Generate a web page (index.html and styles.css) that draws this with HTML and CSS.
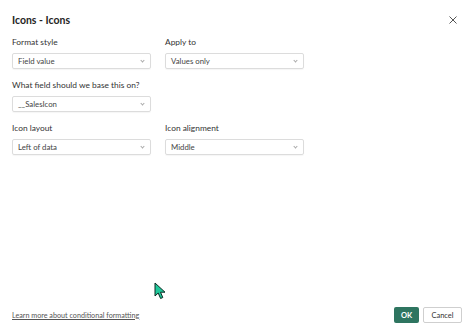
FILE: index.html
```html
<!DOCTYPE html>
<html lang="en">
<head>
  <meta charset="UTF-8" />
  <title>Icons - Icons</title>
  <link rel="stylesheet" href="styles.css">
</head>
<body>
  <div class="dialog">
    <div class="header">
      <h1>Icons - Icons</h1>
      <button type="button" class="close-btn" aria-label="Close">
        <svg width="8" height="8" viewBox="0 0 8 8"><path d="M0.5 0.5 L7.5 7.5 M7.5 0.5 L0.5 7.5" stroke="#555" stroke-width="1" fill="none"/></svg>
      </button>
    </div>

    <!-- Format / apply -->
    <div class="row">
      <div class="field">
        <label>Format style</label>
        <div class="select"><span>Field value</span><span class="chev"></span></div>
      </div>
      <div class="field">
        <label>Apply to</label>
        <div class="select"><span>Values only</span><span class="chev"></span></div>
      </div>
    </div>

    <div class="row">
      <div class="field">
        <label>What field should we base this on?</label>
        <div class="select"><span>__SalesIcon</span><span class="chev"></span></div>
      </div>
    </div>

    <!-- Icon options -->
    <div class="row">
      <div class="field">
        <label>Icon layout</label>
        <div class="select"><span>Left of data</span><span class="chev"></span></div>
      </div>
      <div class="field">
        <label>Icon alignment</label>
        <div class="select"><span>Middle</span><span class="chev"></span></div>
      </div>
    </div>

    <div class="footer">
      <a href="#" class="learn">Learn more about conditional formatting</a>
      <div class="actions">
        <button type="button" class="ok-btn">OK</button>
        <button type="button" class="cancel-btn">Cancel</button>
      </div>
    </div>
  </div>

  <svg class="cursor" width="13" height="18" viewBox="0 0 13 18">
    <path d="M1 1 L1 14 L4.2 11 L6.6 16.5 L8.8 15.5 L6.5 10.2 L11 10.2 Z" fill="#1fc89a" stroke="#0b2a22" stroke-width="1" stroke-linejoin="round"/>
  </svg>
</body>
</html>
```

FILE: styles.css
```css
body {
  margin: 0;
  font-family: Lato, "Open Sans", sans-serif;
  color: #252423;
  background: #fff;
}
.dialog {
  width: 474px;
  height: 335px;
  box-sizing: border-box;
  padding: 10px 12px 12px 12px;
  display: flex;
  flex-direction: column;
}
.header {
  display: flex;
  justify-content: space-between;
  align-items: center;
  height: 20px;
  margin-bottom: 6px;
}
h1 {
  margin: 0;
  font-size: 10.5px;
  font-weight: 700;
  color: #252423;
}
.close-btn {
  border: none;
  background: none;
  padding: 0;
  margin-right: 4px;
  width: 10px;
  height: 10px;
  display: flex;
  align-items: center;
  justify-content: center;
}
.row {
  display: flex;
  gap: 14px;
  margin-bottom: 10px;
}
.field {
  width: 139px;
}
label {
  display: block;
  white-space: nowrap;
  font-size: 8.4px;
  line-height: 13px;
  margin-bottom: 4px;
  color: #333;
}
.select {
  height: 16px;
  box-sizing: border-box;
  border: 1px solid #dcdcdc;
  border-radius: 2px;
  display: flex;
  align-items: center;
  justify-content: space-between;
  padding: 0 6px 0 5px;
  font-size: 7.8px;
  color: #444;
  box-shadow: 0 1px 1px rgba(0, 0, 0, 0.04);
}
.chev {
  width: 2px;
  height: 2px;
  border-right: 1px solid #aaa;
  border-bottom: 1px solid #aaa;
  transform: rotate(45deg);
  margin-top: -2px;
}
.footer {
  margin-top: auto;
  display: flex;
  justify-content: space-between;
  align-items: center;
}
.learn {
  font-size: 7.2px;
  color: #555;
  text-decoration: underline;
}
.actions {
  display: flex;
  gap: 4px;
}
.ok-btn,
.cancel-btn {
  height: 16px;
  box-sizing: border-box;
  font-family: inherit;
  font-size: 7.5px;
  border-radius: 2px;
  padding: 0;
}
.ok-btn {
  width: 25px;
  border: none;
  background: #2e7560;
  color: #fff;
  font-weight: 700;
}
.cancel-btn {
  width: 39px;
  border: 1px solid #cfcfcf;
  background: #fff;
  color: #333;
}
.cursor {
  position: absolute;
  left: 154px;
  top: 282px;
}
```
